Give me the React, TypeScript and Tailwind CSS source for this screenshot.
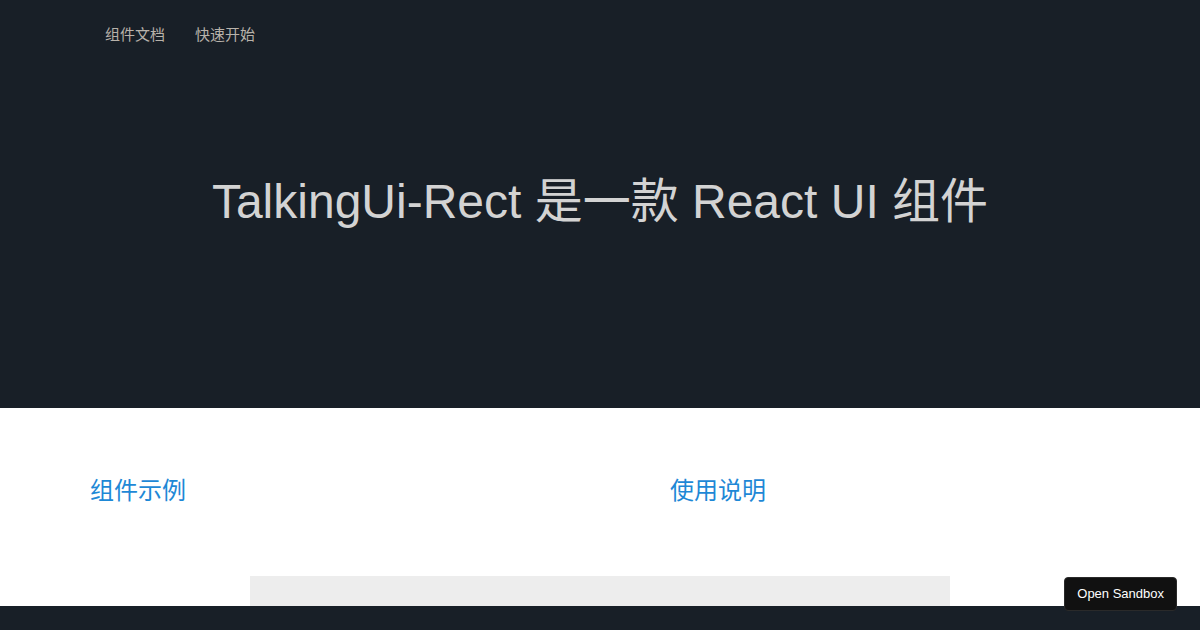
const NAV = ["组件文档", "快速开始"];

export default function App() {
  return (
    <div className="min-h-[630px] bg-[#181f27] font-['Liberation_Sans','Noto_Sans_CJK_SC',sans-serif]">
      <header className="flex h-[408px] flex-col bg-[#181f27]">
        <nav className="flex gap-[30px] pl-[105px] pt-[26px] text-[15px] leading-[18px] text-[#b8b2aa]">
          {NAV.map((item) => (
            <a key={item} href="#" className="hover:text-white">
              {item}
            </a>
          ))}
        </nav>
        <div className="flex flex-1 items-center justify-center pb-[48px]">
          <h1 className="text-[48px] leading-none text-[#d3d3d3]">
            TalkingUi-Rect 是一款 React UI 组件
          </h1>
        </div>
      </header>

      <main className="bg-white">
        <section className="grid grid-cols-[580px_1fr] pl-[90px] pt-[67px]">
          <h2 className="text-[24px] leading-[32px] text-[#1e88d6]">组件示例</h2>
          <h2 className="text-[24px] leading-[32px] text-[#1e88d6]">使用说明</h2>
        </section>
        <div className="px-[250px] pt-[69px]">
          <div className="h-[30px] bg-[#ededed]" />
        </div>
      </main>

      <footer className="h-[24px] bg-[#181f27]" />

      <button className="fixed bottom-[19px] right-[23px] rounded-[4px] border border-[#2a2a2a] bg-[#111111] px-[12px] py-[7px] text-[13px] leading-[18px] text-white">
        Open Sandbox
      </button>
    </div>
  );
}
